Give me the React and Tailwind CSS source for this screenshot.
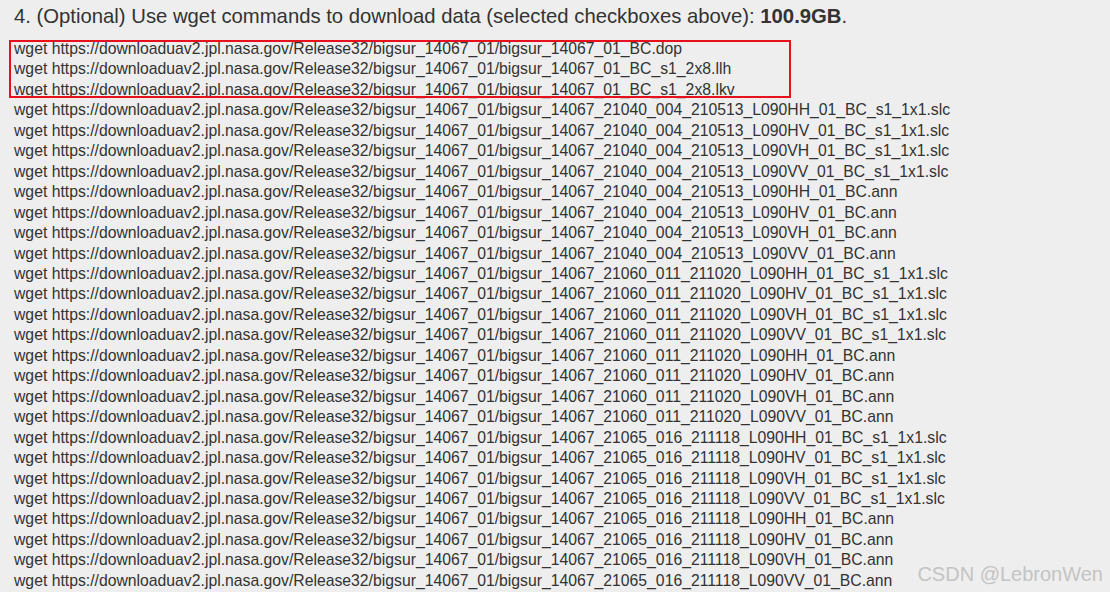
import React from "react";

const P = "wget https://downloaduav2.jpl.nasa.gov/Release32/bigsur_14067_01/bigsur_14067_";
const first = ["01_BC.dop", "01_BC_s1_2x8.llh", "01_BC_s1_2x8.lkv"];
const groups = ["21040_004_210513", "21060_011_211020", "21065_016_211118"];
const pols = ["HH", "HV", "VH", "VV"];
const rest = [];
groups.forEach((g) => {
  pols.forEach((p) => rest.push(`${g}_L090${p}_01_BC_s1_1x1.slc`));
  pols.forEach((p) => rest.push(`${g}_L090${p}_01_BC.ann`));
});

export default function App() {
  return (
    <div
      className="w-[1110px] h-[592px] overflow-hidden bg-[#eeeeee] text-[#333333] relative"
      style={{ fontFamily: '"Liberation Sans", Arial, sans-serif' }}
    >
      <div className="pl-[14px] pt-[4px]">
        <div className="text-[20.3px] leading-[24px]">
          4. (Optional) Use wget commands to download data (selected checkboxes above):{" "}
          <b>100.9GB</b>.
        </div>
        <div className="mt-[11px] text-[15.75px] leading-[20.46px]">
          <div className="relative">
            {first.map((f) => (
              <div key={f} className="whitespace-nowrap">{P + f}</div>
            ))}
            <div className="absolute left-[-5px] top-[1px] w-[782px] h-[58px] border-2 border-[#e8101c]" />
          </div>
          {rest.map((f) => (
            <div key={f} className="whitespace-nowrap">{P + f}</div>
          ))}
        </div>
      </div>
      <div className="absolute right-[7px] bottom-[7px] text-[20px] leading-[22px] text-[#c4c4c4]"
        style={{ fontFamily: '"Liberation Sans", Arial, sans-serif' }}>
        CSDN @LebronWen
      </div>
    </div>
  );
}
